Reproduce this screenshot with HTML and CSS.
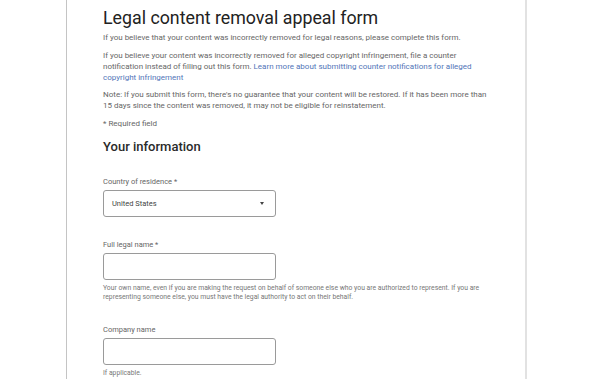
FILE: index.html
```html
<!DOCTYPE html>
<html>
    <head>
        <title>Legal content removal appeal form</title>
        <link rel="stylesheet" href="styles.css">
    </head>
    <body>
        <div class="page">
            <h1 class="title">Legal content removal appeal form</h1>

            <p class="intro">If you believe that your content was incorrectly removed for legal reasons, please complete this form.</p>
            <p class="intro">If you believe your content was incorrectly removed for alleged copyright infringement, file a counter notification instead of filling out this form. <a href="#" class="link">Learn more about submitting counter notifications for alleged copyright infringement</a></p>
            <p class="intro">Note: If you submit this form, there's no guarantee that your content will be restored. If it has been more than 15 days since the content was removed, it may not be eligible for reinstatement.</p>
            <p class="intro required">* Required field</p>

            <h2 class="section">Your information</h2>

            <div class="group">
                <label class="label">Country of residence *</label>
                <div class="select">
                    <span>United States</span>
                    <span class="arrow"></span>
                </div>
            </div>

            <div class="group">
                <label class="label">Full legal name *</label>
                <input type="text" class="field">
                <div class="help">Your own name, even if you are making the request on behalf of someone else who you are authorized to represent. If you are representing someone else, you must have the legal authority to act on their behalf.</div>
            </div>

            <div class="group">
                <label class="label">Company name</label>
                <input type="text" class="field">
                <div class="help">If applicable.</div>
            </div>
        </div>
    </body>
</html>
```

FILE: styles.css
```css
body{
    margin: 0;
    background: white;
    font-family: Roboto, "Liberation Sans", sans-serif;
    color: #666;
}

.page{
    width: 385px;
    min-height: 379px;
    margin-left: 66px;
    padding: 6px 37px 0 36px;
    border-left: 1px solid #c4c4c4;
    border-right: 2px solid #e2e2e2;
}

.title{
    margin: 0 0 3px 0;
    font-size: 17.8px;
    line-height: 23px;
    font-weight: 400;
    color: #222;
}

.intro{
    margin: 0 0 6.5px 0;
    font-size: 8px;
    line-height: 11px;
}

.required{
    margin-bottom: 0;
}

.link{
    color: #5275b8;
    text-decoration: none;
}

.section{
    margin: 10px 0 0 0;
    font-size: 13px;
    line-height: 16px;
    font-weight: 500;
    color: #2a2a2a;
}

.group{
    margin-top: 22px;
    display: flex;
    flex-direction: column;
    align-items: flex-start;
}

.group + .group{
    margin-top: 23px;
}

.label{
    font-size: 7.5px;
    line-height: 10px;
    margin-bottom: 3px;
}

.select, .field{
    box-sizing: border-box;
    width: 173px;
    height: 27px;
    border: 1px solid #9a9a9a;
    border-radius: 3px;
    background: white;
    margin: 0;
}

.select{
    display: flex;
    align-items: center;
    justify-content: space-between;
    padding: 0 11px 0 8px;
    font-size: 7.5px;
    color: #444;
}

.arrow{
    width: 0;
    height: 0;
    border-left: 2.5px solid transparent;
    border-right: 2.5px solid transparent;
    border-top: 3px solid #444;
}

.help{
    margin-top: 4px;
    font-size: 6.8px;
    line-height: 9px;
    width: 385px;
    color: #777;
}
```
